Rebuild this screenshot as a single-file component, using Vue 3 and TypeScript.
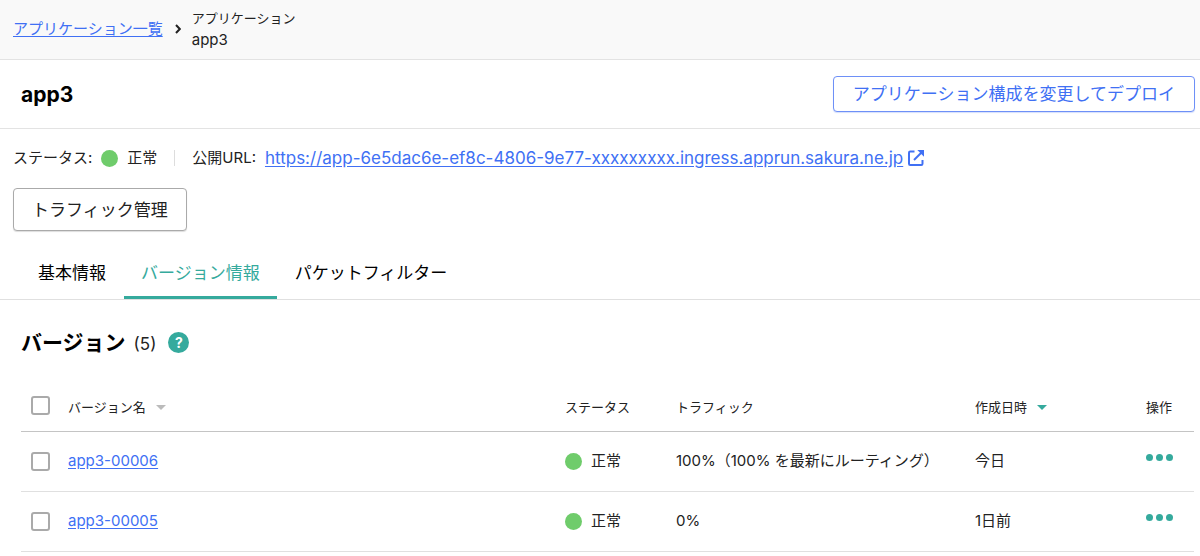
<script setup lang="ts">
import { ref } from 'vue'

interface Version {
  name: string
  status: string
  traffic: string
  created: string
}

const tabs: string[] = ['基本情報', 'バージョン情報', 'パケットフィルター']
const activeTab = ref<string>('バージョン情報')

const versionCount = 5
const versions: Version[] = [
  { name: 'app3-00006', status: '正常', traffic: '100%（100% を最新にルーティング）', created: '今日' },
  { name: 'app3-00005', status: '正常', traffic: '0%', created: '1日前' },
]
const selected = ref<string[]>([])

function toggleAll(event: Event): void {
  const checked = (event.target as HTMLInputElement).checked
  selected.value = checked ? versions.map((v) => v.name) : []
}
</script>

<template>
  <div class="page">
    <nav class="breadcrumb">
      <a class="link" href="#">アプリケーション一覧</a>
      <svg class="chevron" viewBox="0 0 6 10" aria-hidden="true"><path d="M1 1 4.8 5 1 9" /></svg>
      <div class="crumb">
        <span class="crumb-kind">アプリケーション</span>
        <span class="crumb-name">app3</span>
      </div>
    </nav>

    <header class="title-bar">
      <h1>app3</h1>
      <button type="button" class="btn btn-primary">アプリケーション構成を変更してデプロイ</button>
    </header>

    <section class="summary">
      <div class="info">
        <span>ステータス:</span>
        <span class="state info-state"><i class="dot"></i>正常</span>
        <span class="info-url">公開URL:</span>
        <a class="link url" href="#">
          <span>https://app-6e5dac6e-ef8c-4806-9e77-xxxxxxxxx.ingress.apprun.sakura.ne.jp</span>
          <svg class="external" viewBox="0 0 16 16" aria-hidden="true">
            <path d="M6.5 1.5H2.2Q1 1.5 1 2.7v11.1Q1 15 2.2 15h11.1q1.2 0 1.2-1.2V10" />
            <path d="M6 10 14 2" />
            <path class="tip" d="M9.3 0H16v6.7Z" />
          </svg>
        </a>
      </div>
      <button type="button" class="btn btn-default">トラフィック管理</button>
    </section>

    <div class="tabs" role="tablist">
      <button
        v-for="tab in tabs"
        :key="tab"
        type="button"
        role="tab"
        class="tab"
        :class="{ active: tab === activeTab }"
        :aria-selected="tab === activeTab"
        @click="activeTab = tab"
      >{{ tab }}</button>
    </div>

    <main class="content">
      <div class="heading">
        <h2>バージョン</h2>
        <span class="count">({{ versionCount }})</span>
        <button type="button" class="help" aria-label="ヘルプ">?</button>
      </div>

      <table>
        <thead>
          <tr>
            <th class="col-check">
              <input
                type="checkbox"
                aria-label="すべて選択"
                :checked="selected.length === versions.length"
                @change="toggleAll"
              />
            </th>
            <th>
              <button type="button" class="sort">バージョン名<i class="caret"></i></button>
            </th>
            <th class="col-status">ステータス</th>
            <th class="col-traffic">トラフィック</th>
            <th class="col-created">
              <button type="button" class="sort">作成日時<i class="caret on"></i></button>
            </th>
            <th class="col-action">操作</th>
          </tr>
        </thead>
        <tbody>
          <tr v-for="v in versions" :key="v.name">
            <td class="col-check">
              <input v-model="selected" type="checkbox" :value="v.name" :aria-label="v.name" />
            </td>
            <td><a class="link" href="#">{{ v.name }}</a></td>
            <td><div class="state"><i class="dot"></i>{{ v.status }}</div></td>
            <td>{{ v.traffic }}</td>
            <td>{{ v.created }}</td>
            <td>
              <button type="button" class="more" aria-label="操作メニュー"><i></i><i></i><i></i></button>
            </td>
          </tr>
        </tbody>
      </table>
    </main>
  </div>
</template>

<style>
body {
  margin: 0;
  background: #fff;
}
</style>

<style scoped>
.page {
  font-family: Inter, "Noto Sans CJK JP", sans-serif;
  font-size: 15px;
  line-height: 20px;
  color: #222;
}

button {
  font: inherit;
  color: inherit;
  margin: 0;
  padding: 0;
  border: 0;
  background: none;
  cursor: pointer;
}

.link {
  color: #4070f4;
  text-decoration: underline;
  text-underline-offset: 2px;
}

.breadcrumb {
  display: flex;
  align-items: center;
  padding: 8px 13px 9px;
  background: #f9f9f9;
  border-bottom: 1px solid #e3e3e3;
}

.chevron {
  width: 6px;
  height: 10px;
  margin: 0 11px 0 12px;
  fill: none;
  stroke: #222;
  stroke-width: 2;
}

.crumb {
  display: flex;
  flex-direction: column;
}

.crumb-kind {
  font-size: 13px;
  line-height: 21px;
}

.crumb-name {
  line-height: 21px;
}

.title-bar {
  display: flex;
  align-items: center;
  justify-content: space-between;
  padding: 16px 5px 16px 21px;
  border-bottom: 1px solid #e3e3e3;
}

h1,
h2 {
  margin: 0;
  padding-top: 2px;
  font-size: 21px;
  line-height: 26px;
  font-weight: 700;
  color: #000;
}

.btn {
  border: 1px solid;
  border-radius: 4px;
  background: #fff;
  font-size: 17px;
}

.btn-primary {
  height: 36px;
  padding: 0 19px;
  border-color: #6e90f7;
  color: #4070f4;
  box-shadow: 0 1px 1px #d5dffc;
}

.btn-default {
  height: 43px;
  padding: 0 18px;
  border-color: #aaa;
  box-shadow: 0 1px 1px #ddd;
}

.summary {
  padding: 19px 13px 0;
}

.info {
  display: flex;
  align-items: center;
  margin-bottom: 20px;
}

.state {
  display: flex;
  align-items: center;
  gap: 9px;
}

.dot {
  width: 17px;
  height: 17px;
  border-radius: 50%;
  background: #6fcc6b;
}

.info-state {
  margin-left: 9px;
}

.info-url {
  margin-left: 17px;
  padding-left: 18px;
  background: linear-gradient(#ddd, #ddd) left / 1px 16px no-repeat;
}

.url {
  display: flex;
  align-items: center;
  gap: 5px;
  margin-left: 9px;
  font-size: 17px;
}

.external {
  width: 16px;
  height: 16px;
  fill: none;
  stroke: currentColor;
  stroke-width: 2;
}

.external .tip {
  fill: currentColor;
  stroke: none;
}

.tabs {
  display: flex;
  gap: 1px;
  margin-top: 17px;
  padding-left: 21px;
  border-bottom: 1px solid #e0e0e0;
}

.tab {
  padding: 15px 17px 13px;
  border-bottom: 3px solid transparent;
  font-size: 17px;
  color: #000;
}

.tab.active {
  border-color: #35aa9d;
  color: #35aa9d;
}

.content {
  padding: 28px 6px 0 21px;
}

.heading {
  display: flex;
  align-items: center;
}

.count {
  margin: 4px 12px 0 8px;
  font-size: 17px;
}

.help {
  width: 21px;
  height: 21px;
  border-radius: 50%;
  background: #35aa9d;
  color: #fff;
  font-size: 14px;
  font-weight: 700;
  line-height: 21px;
}

table {
  width: 100%;
  margin-top: 24px;
  border-collapse: collapse;
  table-layout: fixed;
}

th,
td {
  padding: 0;
  text-align: left;
  font-weight: 400;
}

th {
  box-sizing: border-box;
  height: 51px;
  padding-top: 4px;
  font-size: 13px;
  border-bottom: 1px solid #c4c4c4;
}

td {
  height: 59px;
  border-bottom: 1px solid #e0e0e0;
}

.col-check {
  width: 47px;
  padding: 0 0 0 10px;
  box-sizing: border-box;
}

.col-status {
  width: 111px;
}

.col-traffic {
  width: 299px;
}

.col-created {
  width: 171px;
}

.col-action {
  width: 48px;
}

input[type="checkbox"] {
  display: block;
  appearance: none;
  box-sizing: border-box;
  width: 19px;
  height: 19px;
  margin: 0;
  border: 2px solid #aaa;
  border-radius: 3px;
  background: #fff;
}

input[type="checkbox"]:checked {
  border-color: #35aa9d;
  background: #35aa9d;
}

.sort {
  display: flex;
  align-items: center;
  gap: 10px;
}

.caret {
  border: 5px solid transparent;
  border-top-color: #bbb;
  border-bottom: 0;
}

.caret.on {
  border-top-color: #35aa9d;
}

.more {
  display: flex;
  gap: 3px;
  padding-bottom: 8px;
}

.more i {
  width: 7px;
  height: 7px;
  border-radius: 50%;
  background: #35aa9d;
}
</style>
